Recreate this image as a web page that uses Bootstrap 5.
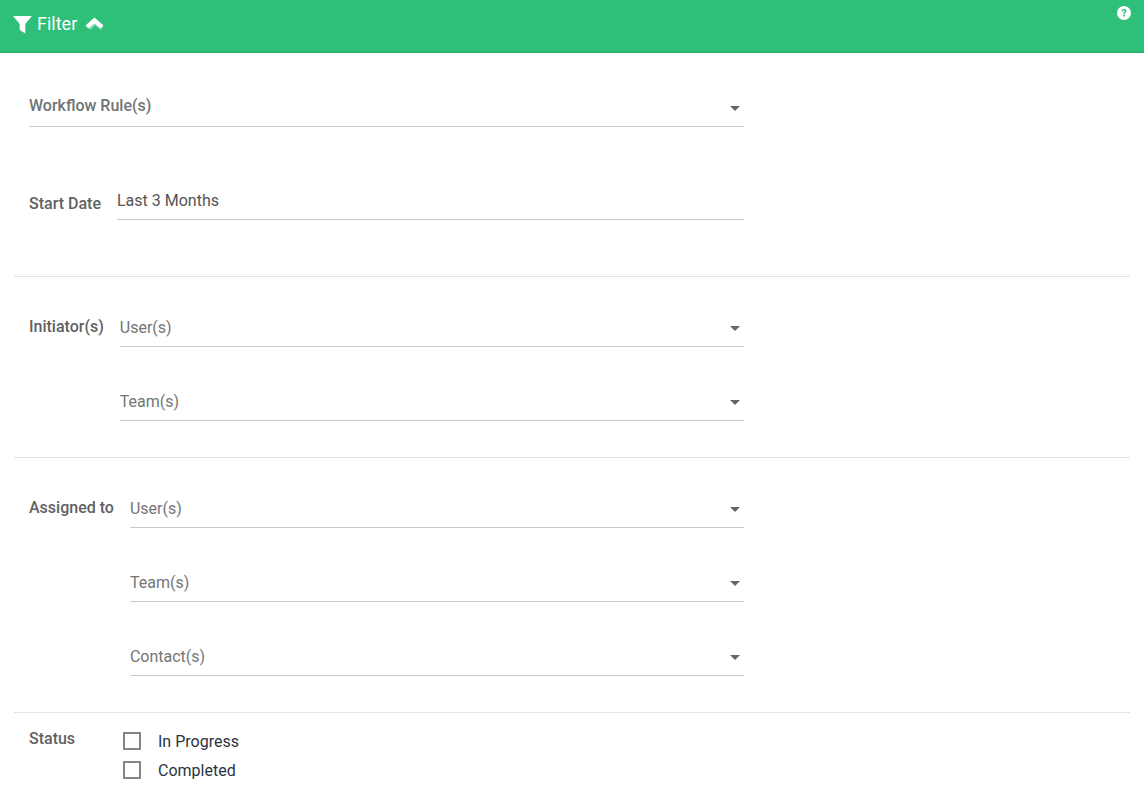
<!DOCTYPE html>
<html lang="en">
<head>
<meta charset="utf-8">
<title>Filter</title>
<link rel="stylesheet" href="https://cdn.jsdelivr.net/npm/bootstrap@5.3.0/dist/css/bootstrap.min.css">
<style>
html,body{height:100%;}
body{font-family:Roboto,"Liberation Sans",sans-serif;font-size:16px;color:#333;background:#fff;overflow:hidden;}
.flt-head{height:53px;background:#2ebf79;border-bottom:1px solid #27a869;color:#fff;padding:0 14px;}
.flt-title{font-size:18px;line-height:24px;margin-top:12px;gap:5px;}
.flt-help{margin-top:6px;margin-right:-1px;}
.flt-body{padding:0 14px;}
.flt-sec{padding:0 15px;border-bottom:1px solid #e3e3e3;}
.flt-sec:last-child{border-bottom:0;}
.flt-wrap{width:715px;}
.flt-sec-a{padding-top:34px;padding-bottom:56px;}
.flt-sec-b{padding-top:30px;padding-bottom:36px;}
.flt-label{font-weight:500;font-size:16px;line-height:20px;color:#616161;white-space:nowrap;margin-right:16px;padding-top:10px;}
.flt-label-date{padding-top:14px;}
.flt-stack{gap:34px;}
.flt-field{height:40px;border-bottom:1px solid #c9cccc;font-size:16px;line-height:20px;padding-top:11px;color:#757575;}
.flt-field-rule{padding-top:9px;color:#6f7474;font-weight:500;}
.flt-field-rule .flt-caret{margin-top:10px;}
.flt-field-val{color:#555;padding-top:11px;}
.flt-caret{width:0;height:0;border-left:5px solid transparent;border-right:5px solid transparent;border-top:5px solid #666;margin-top:8px;margin-right:4px;}
.flt-gap{margin-top:53px;}
.flt-status{padding-top:15px;}
.flt-box{width:18px;height:18px;border:2px solid #858585;margin-left:32px;margin-right:17px;margin-top:4px;flex:none;}
.flt-check{font-size:16px;line-height:20px;height:29px;color:#2a3442;}
.flt-check-text{padding-top:4px;}
.flt-status-label{width:62px;margin-right:0;padding-top:1px;}
.flt-icon-filter{margin-top:2px;margin-left:-1px;}
.flt-icon-up{margin-left:3px;}
</style>
</head>
<body>
<div class="flt-head d-flex justify-content-between align-items-start">
  <div class="flt-title d-flex align-items-center">
    <svg class="flt-icon-filter" width="19" height="18" viewBox="0 0 19 18" aria-hidden="true"><path d="M0 0H19L12.3 8V17.5L6.7 14V8Z" fill="#fff"/></svg>
    <span>Filter</span>
    <svg class="flt-icon-up" width="21" height="14" viewBox="0 0 21 14" aria-hidden="true"><path d="M2.5 10L10.5 3L18.5 10L15.5 13L10.5 8.5L5.5 13Z" fill="#fff" fill-opacity=".35"/><path d="M0.5 8.5L9.5 0.5L18.5 8.5L15.5 11.5L9.5 6.5L3.5 11.5Z" fill="#fff"/></svg>
  </div>
  <svg class="flt-help" width="14" height="14" viewBox="0 0 14 14" aria-hidden="true"><circle cx="7" cy="7" r="7" fill="#fff"/><path d="M4.6 5.4C4.7 3.9 5.7 3.1 7.1 3.1C8.5 3.1 9.5 3.9 9.5 5.1C9.5 6.6 7.8 6.6 7.8 8H6.3C6.3 6 7.9 6.1 7.9 5.2C7.9 4.7 7.5 4.4 7 4.4C6.5 4.4 6.1 4.8 6 5.4ZM6.2 8.8H7.9V10.5H6.2Z" fill="#2ebf79"/></svg>
</div>
<div class="flt-body">
  <div class="flt-sec flt-sec-a">
    <div class="flt-wrap">
      <div class="flt-field flt-field-rule d-flex justify-content-between"><span>Workflow Rule(s)</span><i class="flt-caret"></i></div>
      <div class="d-flex flt-gap">
        <div class="flt-label flt-label-date">Start Date</div>
        <div class="flt-field flt-field-val flex-grow-1">Last 3 Months</div>
      </div>
    </div>
  </div>
  <div class="flt-sec flt-sec-b">
    <div class="flt-wrap d-flex">
      <div class="flt-label">Initiator(s)</div>
      <div class="flex-grow-1 d-flex flex-column flt-stack">
        <div class="flt-field d-flex justify-content-between"><span>User(s)</span><i class="flt-caret"></i></div>
        <div class="flt-field d-flex justify-content-between"><span>Team(s)</span><i class="flt-caret"></i></div>
      </div>
    </div>
  </div>
  <div class="flt-sec flt-sec-b">
    <div class="flt-wrap d-flex">
      <div class="flt-label">Assigned to</div>
      <div class="flex-grow-1 d-flex flex-column flt-stack">
        <div class="flt-field d-flex justify-content-between"><span>User(s)</span><i class="flt-caret"></i></div>
        <div class="flt-field d-flex justify-content-between"><span>Team(s)</span><i class="flt-caret"></i></div>
        <div class="flt-field d-flex justify-content-between"><span>Contact(s)</span><i class="flt-caret"></i></div>
      </div>
    </div>
  </div>
  <div class="flt-sec flt-status">
    <div class="d-flex">
      <div class="flt-label flt-status-label">Status</div>
      <div class="d-flex flex-column">
        <div class="flt-check d-flex align-items-start"><span class="flt-box"></span><span class="flt-check-text">In Progress</span></div>
        <div class="flt-check d-flex align-items-start"><span class="flt-box"></span><span class="flt-check-text">Completed</span></div>
      </div>
    </div>
  </div>
</div>
<script src="https://cdn.jsdelivr.net/npm/bootstrap@5.3.0/dist/js/bootstrap.bundle.min.js"></script>
</body>
</html>
